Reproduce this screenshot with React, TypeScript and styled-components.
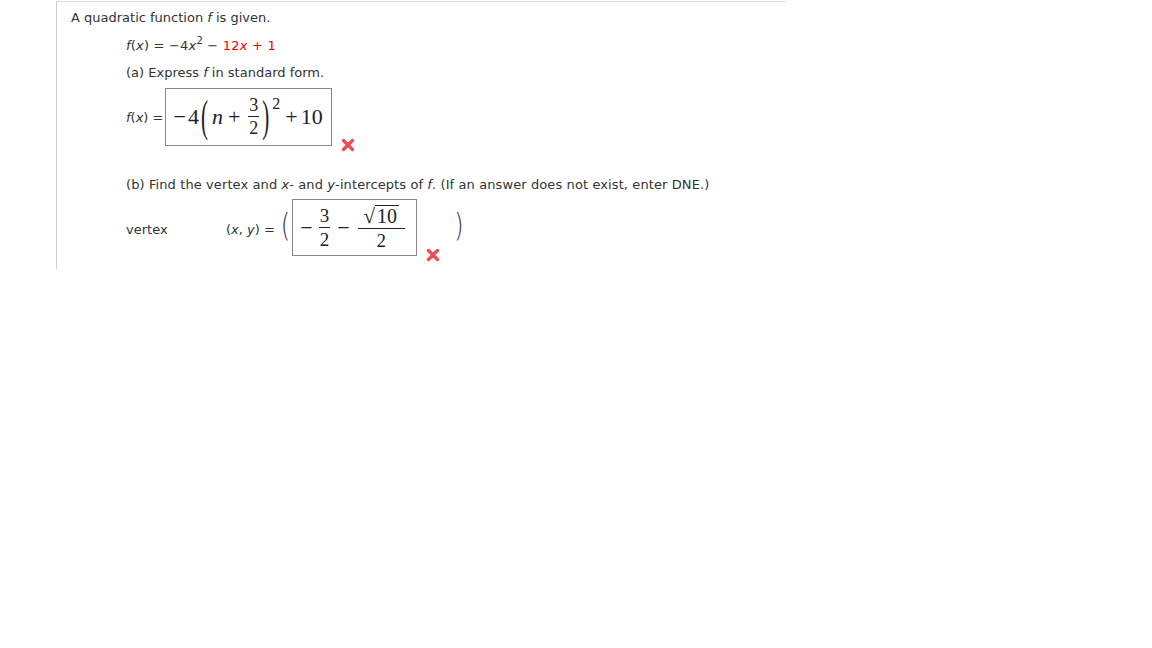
import React from 'react';
import styled, { createGlobalStyle } from 'styled-components';

const GlobalStyle = createGlobalStyle`
  body {
    margin: 0;
    background: #fff;
    font-family: 'DejaVu Sans', Verdana, sans-serif;
    font-size: 13px;
    color: #333;
  }
`;

const Frame = styled.div`
  margin-left: 56px;
  width: 729px;
  height: 268px;
  border-left: 1px solid #ccc;
`;

const Panel = styled.div`
  margin-top: 1px;
  border-top: 1px solid #ddd;
  padding: 8px 0 0 14px;
`;

const Line = styled.div<{ $indent?: number; $top?: number; $spacing?: number }>`
  margin-left: ${(p) => p.$indent ?? 0}px;
  margin-top: ${(p) => p.$top ?? 0}px;
  letter-spacing: ${(p) => p.$spacing ?? 0}px;
  line-height: 16px;
  white-space: nowrap;
`;

const Red = styled.span`
  color: #e00;
`;

const Var = styled.i`
  font-style: italic;
`;

const Sup = styled.sup`
  font-size: 10px;
  vertical-align: 6px;
  line-height: 0;
`;

const AnswerRow = styled.div<{ $top: number }>`
  display: flex;
  align-items: flex-start;
  margin-left: 55px;
  margin-top: ${(p) => p.$top}px;
`;

const Label = styled.span<{ $width?: number; $offset: number }>`
  width: ${(p) => (p.$width ? `${p.$width}px` : 'auto')};
  margin-top: ${(p) => p.$offset}px;
  line-height: 16px;
  white-space: nowrap;
`;

const MathBox = styled.div<{ $w: number; $h: number }>`
  display: flex;
  align-items: center;
  box-sizing: border-box;
  width: ${(p) => p.$w}px;
  height: ${(p) => p.$h}px;
  margin-left: 2px;
  border: 1px solid #888;
  padding-left: 7px;
  font-family: 'Liberation Serif', 'DejaVu Serif', serif;
  font-size: 22px;
  color: #222;
  white-space: nowrap;
`;

const MathVar = styled.span`
  font-style: italic;
  margin: 0 2px 0 2px;
`;

const Op = styled.span<{ $l?: number; $r?: number }>`
  margin: 0 ${(p) => p.$r ?? 4}px 0 ${(p) => p.$l ?? 4}px;
`;

const Frac = styled.span<{ $size: number; $l?: number; $r?: number }>`
  display: inline-flex;
  flex-direction: column;
  align-items: center;
  font-size: ${(p) => p.$size}px;
  line-height: ${(p) => p.$size + 1}px;
  margin: 0 ${(p) => p.$r ?? 2}px 0 ${(p) => p.$l ?? 2}px;
`;

const Part = styled.span<{ $pad?: number }>`
  padding: 0 ${(p) => p.$pad ?? 1}px;
`;

const FracBar = styled.span`
  display: block;
  width: 100%;
  margin: 1px 0 2px;
  border-top: 1px solid #222;
`;

const BigParen = styled.span`
  display: inline-block;
  font-size: 21px;
  transform: scaleY(2.1);
  transform-origin: center;
  margin: 0 2px;
`;

const Supm = styled.span`
  align-self: flex-start;
  margin: 6px 0 0 1px;
  font-size: 16px;
`;

const Sqrt = styled.span`
  display: inline-flex;
  align-items: flex-end;
`;

const Radical = styled.span`
  font-size: 21px;
  line-height: 20px;
`;

const Radicand = styled.span`
  border-top: 1px solid #222;
  padding: 0 2px;
  font-size: 20px;
`;

const OuterParen = styled.span<{ $offset: number; $gap: number }>`
  display: inline-block;
  font-family: 'DejaVu Sans', sans-serif;
  font-size: 24px;
  font-weight: 200;
  color: #333;
  transform: scaleY(1.35);
  margin-top: ${(p) => p.$offset}px;
  margin-left: ${(p) => p.$gap}px;
`;

const Wrong = styled.svg<{ $dx: number; $dy: number }>`
  flex: none;
  margin-left: ${(p) => p.$dx}px;
  margin-top: ${(p) => p.$dy}px;
`;

const Cross = ({ dx, dy }: { dx: number; dy: number }) => (
  <Wrong $dx={dx} $dy={dy} width="14" height="14" viewBox="0 0 14 14">
    <path
      d="M2.5 2.5 L11.5 11.5 M11.5 2.5 L2.5 11.5"
      stroke="#ef4d56"
      strokeWidth="3.4"
      strokeLinecap="round"
    />
  </Wrong>
);

const App = () => {
  return (
    <React.Fragment>
      <GlobalStyle />
      <Frame>
        <Panel>
          <Line>
            A quadratic function <Var>f</Var> is given.
          </Line>
          <Line $indent={55} $top={12} $spacing={0.2}>
            <Var>f</Var>(<Var>x</Var>) = −4<Var>x</Var>
            <Sup>2</Sup> − <Red>12<Var>x</Var> + 1</Red>
          </Line>
          <Line $indent={55} $top={11}>
            (a) Express <Var>f</Var> in standard form.
          </Line>

          <AnswerRow $top={7}>
            <Label $offset={22}>
              <Var>f</Var>(<Var>x</Var>) =
            </Label>
            <MathBox $w={167} $h={58}>
              <Op $l={0} $r={2}>−</Op>4
              <BigParen>(</BigParen>
              <MathVar>n</MathVar>
              <Op $l={3} $r={3}>+</Op>
              <Frac $size={18} $l={5} $r={1}>
                <Part $pad={1}>3</Part>
                <FracBar />
                <Part $pad={1}>2</Part>
              </Frac>
              <BigParen>)</BigParen>
              <Supm>2</Supm>
              <Op $l={5} $r={3}>+</Op>10
            </MathBox>
            <Cross dx={9} dy={50} />
          </AnswerRow>

          <Line $indent={55} $top={25} $spacing={0.1}>
            (b) Find the vertex and <Var>x</Var>- and <Var>y</Var>-intercepts of{' '}
            <Var>f</Var>. (If an answer does not exist, enter DNE.)
          </Line>

          <AnswerRow $top={6}>
            <Label $width={100} $offset={23}>
              vertex
            </Label>
            <Label $offset={23}>
              (<Var>x</Var>, <Var>y</Var>) =
            </Label>
            <OuterParen $offset={12} $gap={6}>
              (
            </OuterParen>
            <MathBox $w={125} $h={57}>
              <Op $l={0} $r={5}>−</Op>
              <Frac $size={19} $l={1} $r={7}>
                <Part>3</Part>
                <FracBar />
                <Part>2</Part>
              </Frac>
              <Op $l={0} $r={8}>−</Op>
              <Frac $size={19} $l={0} $r={0}>
                <Part $pad={6}>
                  <Sqrt>
                    <Radical>√</Radical>
                    <Radicand>10</Radicand>
                  </Sqrt>
                </Part>
                <FracBar />
                <Part>2</Part>
              </Frac>
            </MathBox>
            <Cross dx={9} dy={49} />
            <OuterParen $offset={12} $gap={14}>
              )
            </OuterParen>
          </AnswerRow>
        </Panel>
      </Frame>
    </React.Fragment>
  );
};

export default App;
